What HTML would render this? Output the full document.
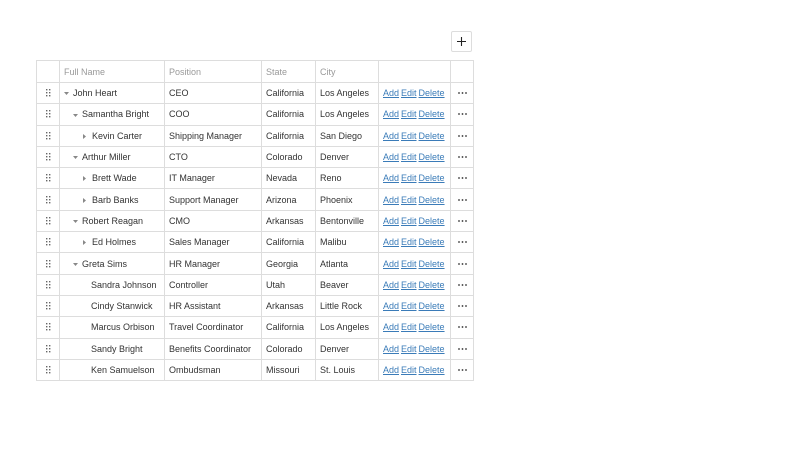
<!DOCTYPE html>
<html><head><style>
body{margin:0;width:800px;height:450px;background:#fff;font-family:"Liberation Sans",sans-serif;font-size:9px;color:#333;position:relative}
.plus{position:absolute;left:451px;top:31px;width:21px;height:21px;border:1px solid #ddd;box-sizing:border-box;border-radius:2px}
table{position:absolute;left:36px;top:60px;border-collapse:collapse;table-layout:fixed}
td,th{border:1px solid #ddd;height:20.3px;padding:0 0 0 4px;white-space:nowrap;overflow:hidden;text-align:left;font-weight:normal}
th{color:#999;height:21px}
a{color:#3a7bb8;text-decoration:underline;margin-right:2px}
.d{padding:0;text-align:center;line-height:0}
.d svg{vertical-align:middle}
.c{display:inline-block;width:9px;vertical-align:middle;line-height:0}
</style></head><body>
<div class="plus"><svg width="19" height="19"><path d="M9.5 5v9M5 9.5h9" stroke="#222" stroke-width="1.1"/></svg></div>
<svg width="0" height="0" style="position:absolute"><defs>
<g id="dr" fill="#666"><rect x="0" y="0" width="1.4" height="1.4"/><rect x="3" y="0" width="1.4" height="1.4"/><rect x="0" y="3" width="1.4" height="1.4"/><rect x="3" y="3" width="1.4" height="1.4"/><rect x="0" y="6" width="1.4" height="1.4"/><rect x="3" y="6" width="1.4" height="1.4"/></g>
<g id="dt" fill="#333"><circle cx="1" cy="1" r="0.9"/><circle cx="4.5" cy="1" r="0.9"/><circle cx="8" cy="1" r="0.9"/></g>
<path id="dn" d="M0 0h5l-2.5 3z" fill="#888"/>
<path id="rt" d="M0 0v5l3-2.5z" fill="#888"/>
</defs></svg>
<table>
<colgroup><col style="width:23px"><col style="width:105px"><col style="width:97px"><col style="width:54px"><col style="width:63px"><col style="width:72px"><col style="width:23px"></colgroup>
<tr><th></th><th>Full Name</th><th>Position</th><th>State</th><th>City</th><th></th><th></th></tr>
<tr><td class="d"><svg width="5" height="8"><use href="#dr"/></svg></td><td><span class="c"><svg width="5" height="3"><use href="#dn"/></svg></span>John Heart</td><td>CEO</td><td>California</td><td>Los Angeles</td><td><a>Add</a><a>Edit</a><a>Delete</a></td><td class="d"><svg width="9" height="2"><use href="#dt"/></svg></td></tr>
<tr><td class="d"><svg width="5" height="8"><use href="#dr"/></svg></td><td style="padding-left:13px"><span class="c"><svg width="5" height="3"><use href="#dn"/></svg></span>Samantha Bright</td><td>COO</td><td>California</td><td>Los Angeles</td><td><a>Add</a><a>Edit</a><a>Delete</a></td><td class="d"><svg width="9" height="2"><use href="#dt"/></svg></td></tr>
<tr><td class="d"><svg width="5" height="8"><use href="#dr"/></svg></td><td style="padding-left:23px"><span class="c"><svg width="3" height="5"><use href="#rt"/></svg></span>Kevin Carter</td><td>Shipping Manager</td><td>California</td><td>San Diego</td><td><a>Add</a><a>Edit</a><a>Delete</a></td><td class="d"><svg width="9" height="2"><use href="#dt"/></svg></td></tr>
<tr><td class="d"><svg width="5" height="8"><use href="#dr"/></svg></td><td style="padding-left:13px"><span class="c"><svg width="5" height="3"><use href="#dn"/></svg></span>Arthur Miller</td><td>CTO</td><td>Colorado</td><td>Denver</td><td><a>Add</a><a>Edit</a><a>Delete</a></td><td class="d"><svg width="9" height="2"><use href="#dt"/></svg></td></tr>
<tr><td class="d"><svg width="5" height="8"><use href="#dr"/></svg></td><td style="padding-left:23px"><span class="c"><svg width="3" height="5"><use href="#rt"/></svg></span>Brett Wade</td><td>IT Manager</td><td>Nevada</td><td>Reno</td><td><a>Add</a><a>Edit</a><a>Delete</a></td><td class="d"><svg width="9" height="2"><use href="#dt"/></svg></td></tr>
<tr><td class="d"><svg width="5" height="8"><use href="#dr"/></svg></td><td style="padding-left:23px"><span class="c"><svg width="3" height="5"><use href="#rt"/></svg></span>Barb Banks</td><td>Support Manager</td><td>Arizona</td><td>Phoenix</td><td><a>Add</a><a>Edit</a><a>Delete</a></td><td class="d"><svg width="9" height="2"><use href="#dt"/></svg></td></tr>
<tr><td class="d"><svg width="5" height="8"><use href="#dr"/></svg></td><td style="padding-left:13px"><span class="c"><svg width="5" height="3"><use href="#dn"/></svg></span>Robert Reagan</td><td>CMO</td><td>Arkansas</td><td>Bentonville</td><td><a>Add</a><a>Edit</a><a>Delete</a></td><td class="d"><svg width="9" height="2"><use href="#dt"/></svg></td></tr>
<tr><td class="d"><svg width="5" height="8"><use href="#dr"/></svg></td><td style="padding-left:23px"><span class="c"><svg width="3" height="5"><use href="#rt"/></svg></span>Ed Holmes</td><td>Sales Manager</td><td>California</td><td>Malibu</td><td><a>Add</a><a>Edit</a><a>Delete</a></td><td class="d"><svg width="9" height="2"><use href="#dt"/></svg></td></tr>
<tr><td class="d"><svg width="5" height="8"><use href="#dr"/></svg></td><td style="padding-left:13px"><span class="c"><svg width="5" height="3"><use href="#dn"/></svg></span>Greta Sims</td><td>HR Manager</td><td>Georgia</td><td>Atlanta</td><td><a>Add</a><a>Edit</a><a>Delete</a></td><td class="d"><svg width="9" height="2"><use href="#dt"/></svg></td></tr>
<tr><td class="d"><svg width="5" height="8"><use href="#dr"/></svg></td><td style="padding-left:31px">Sandra Johnson</td><td>Controller</td><td>Utah</td><td>Beaver</td><td><a>Add</a><a>Edit</a><a>Delete</a></td><td class="d"><svg width="9" height="2"><use href="#dt"/></svg></td></tr>
<tr><td class="d"><svg width="5" height="8"><use href="#dr"/></svg></td><td style="padding-left:31px">Cindy Stanwick</td><td>HR Assistant</td><td>Arkansas</td><td>Little Rock</td><td><a>Add</a><a>Edit</a><a>Delete</a></td><td class="d"><svg width="9" height="2"><use href="#dt"/></svg></td></tr>
<tr><td class="d"><svg width="5" height="8"><use href="#dr"/></svg></td><td style="padding-left:31px">Marcus Orbison</td><td>Travel Coordinator</td><td>California</td><td>Los Angeles</td><td><a>Add</a><a>Edit</a><a>Delete</a></td><td class="d"><svg width="9" height="2"><use href="#dt"/></svg></td></tr>
<tr><td class="d"><svg width="5" height="8"><use href="#dr"/></svg></td><td style="padding-left:31px">Sandy Bright</td><td>Benefits Coordinator</td><td>Colorado</td><td>Denver</td><td><a>Add</a><a>Edit</a><a>Delete</a></td><td class="d"><svg width="9" height="2"><use href="#dt"/></svg></td></tr>
<tr><td class="d"><svg width="5" height="8"><use href="#dr"/></svg></td><td style="padding-left:31px">Ken Samuelson</td><td>Ombudsman</td><td>Missouri</td><td>St. Louis</td><td><a>Add</a><a>Edit</a><a>Delete</a></td><td class="d"><svg width="9" height="2"><use href="#dt"/></svg></td></tr>
</table>
</body></html>
